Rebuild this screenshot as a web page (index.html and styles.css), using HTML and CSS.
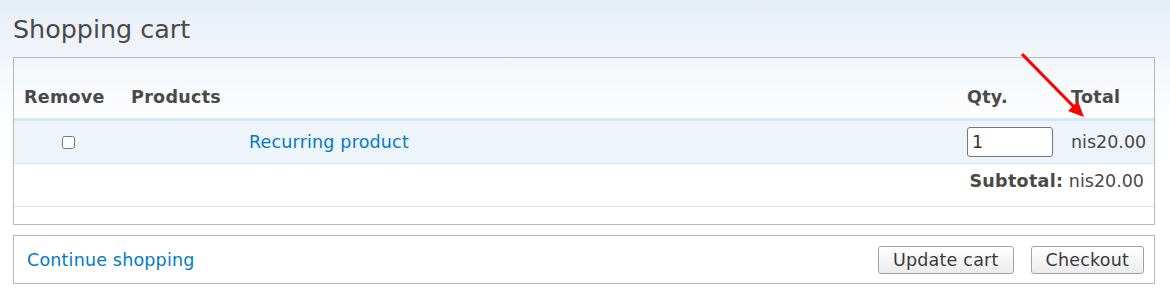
FILE: index.html
```html
<!DOCTYPE html>
<html lang="en">
<head>
    <meta charset="UTF-8">
    <meta name="viewport" content="width=device-width, initial-scale=1.0">
    <title>Shopping cart</title>
    <link rel="stylesheet" href="styles.css">
</head>
<body>
    <h1 class="title">Shopping cart</h1>

    <div class="cartbox">
        <table class="cart">
            <colgroup>
                <col class="c-remove">
                <col class="c-image">
                <col class="c-desc">
                <col class="c-qty">
                <col class="c-total">
            </colgroup>
            <thead>
                <tr>
                    <th class="center">Remove</th>
                    <th colspan="2">Products</th>
                    <th>Qty.</th>
                    <th>Total</th>
                </tr>
            </thead>
            <tbody>
                <tr class="item">
                    <td><input type="checkbox" class="rm"></td>
                    <td></td>
                    <td><a href="#" class="prod">Recurring product</a></td>
                    <td><input type="text" class="qty" value="1"></td>
                    <td>nis20.00</td>
                </tr>
                <tr class="subtotal">
                    <td colspan="5"><b>Subtotal:</b> nis20.00</td>
                </tr>
            </tbody>
        </table>
    </div>

    <div class="actions">
        <a href="#">Continue shopping</a>
        <div class="btns">
            <button type="button" class="btn">Update cart</button>
            <button type="button" class="btn">Checkout</button>
        </div>
    </div>

    <!-- annotation arrow -->
    <svg class="arrow" width="1170" height="299" viewBox="0 0 1170 299">
        <line x1="1022" y1="54" x2="1075" y2="108" stroke="#ff0000" stroke-width="3.2"/>
        <polygon points="1084,117 1078,101 1068,111" fill="#ff0000"/>
    </svg>
</body>
</html>
```

FILE: styles.css
```css
*{
    box-sizing: border-box;
}
body{
    margin: 0 15px 0 13px;
    font-family: "DejaVu Sans", Verdana, sans-serif;
    font-size: 17.5px;
    line-height: 20px;
    letter-spacing: 0;
    color: #494949;
    background: linear-gradient(to bottom, #e6eef6 0px, #ffffff 125px) no-repeat;
    position: relative;
    min-height: 299px;
}
a{
    color: #027ac6;
    text-decoration: none;
    letter-spacing: 0.18px;
}
.title{
    margin: 0;
    padding-top: 14px;
    font-size: 25.4px;
    line-height: 30px;
    font-weight: normal;
    color: #494949;
}
.cartbox{
    margin-top: 13px;
    border: 1px solid #b8b8b8;
    padding-bottom: 17px;
}
.cart{
    width: 100%;
    border-collapse: separate;
    border-spacing: 0;
    table-layout: fixed;
}
.c-remove{ width: 107px; }
.c-image{ width: 118px; }
.c-qty{ width: 104px; }
.c-total{ width: 93px; }
.cart th{
    text-align: left;
    font-weight: bold;
    letter-spacing: 0.3px;
    padding: 29px 10px 11px;
    border-bottom: 3px solid #d3e7f4;
}
.cart td{
    padding: 6px 10px;
    vertical-align: middle;
    white-space: nowrap;
}
.cart td b{
    letter-spacing: 0.3px;
}
.item td{
    background-color: #edf4fa;
    border-bottom: 1px solid #d3e7f4;
}
.rm{
    display: block;
    width: 13px;
    height: 13px;
    margin: 0 0 0 38px;
}
.qty{
    display: block;
    width: 86px;
    height: 30px;
    padding: 0 4px;
    border: 1px solid #777;
    border-radius: 3px;
    background: #fff;
    font-family: "DejaVu Sans", sans-serif;
    font-size: 17.5px;
    color: #333;
    outline: none;
}
.subtotal td{
    text-align: right;
    padding: 7px 10px 15px;
    border-bottom: 1px solid #d3e7f4;
}
.actions{
    margin-top: 10px;
    border: 1px solid #b8b8b8;
    padding: 10px 10px 9px 13px;
    display: flex;
    align-items: center;
    justify-content: space-between;
}
.btns{
    display: flex;
    gap: 17px;
}
.btn{
    height: 28px;
    padding: 0 14px;
    border: 1px solid #a2a2a2;
    border-radius: 3px;
    background: linear-gradient(to bottom, #ffffff, #ececec);
    font-family: "DejaVu Sans", sans-serif;
    font-size: 17.5px;
    letter-spacing: 0.2px;
    color: #3a3a3a;
}
.arrow{
    position: absolute;
    left: -13px;
    top: 0;
    pointer-events: none;
}
```
